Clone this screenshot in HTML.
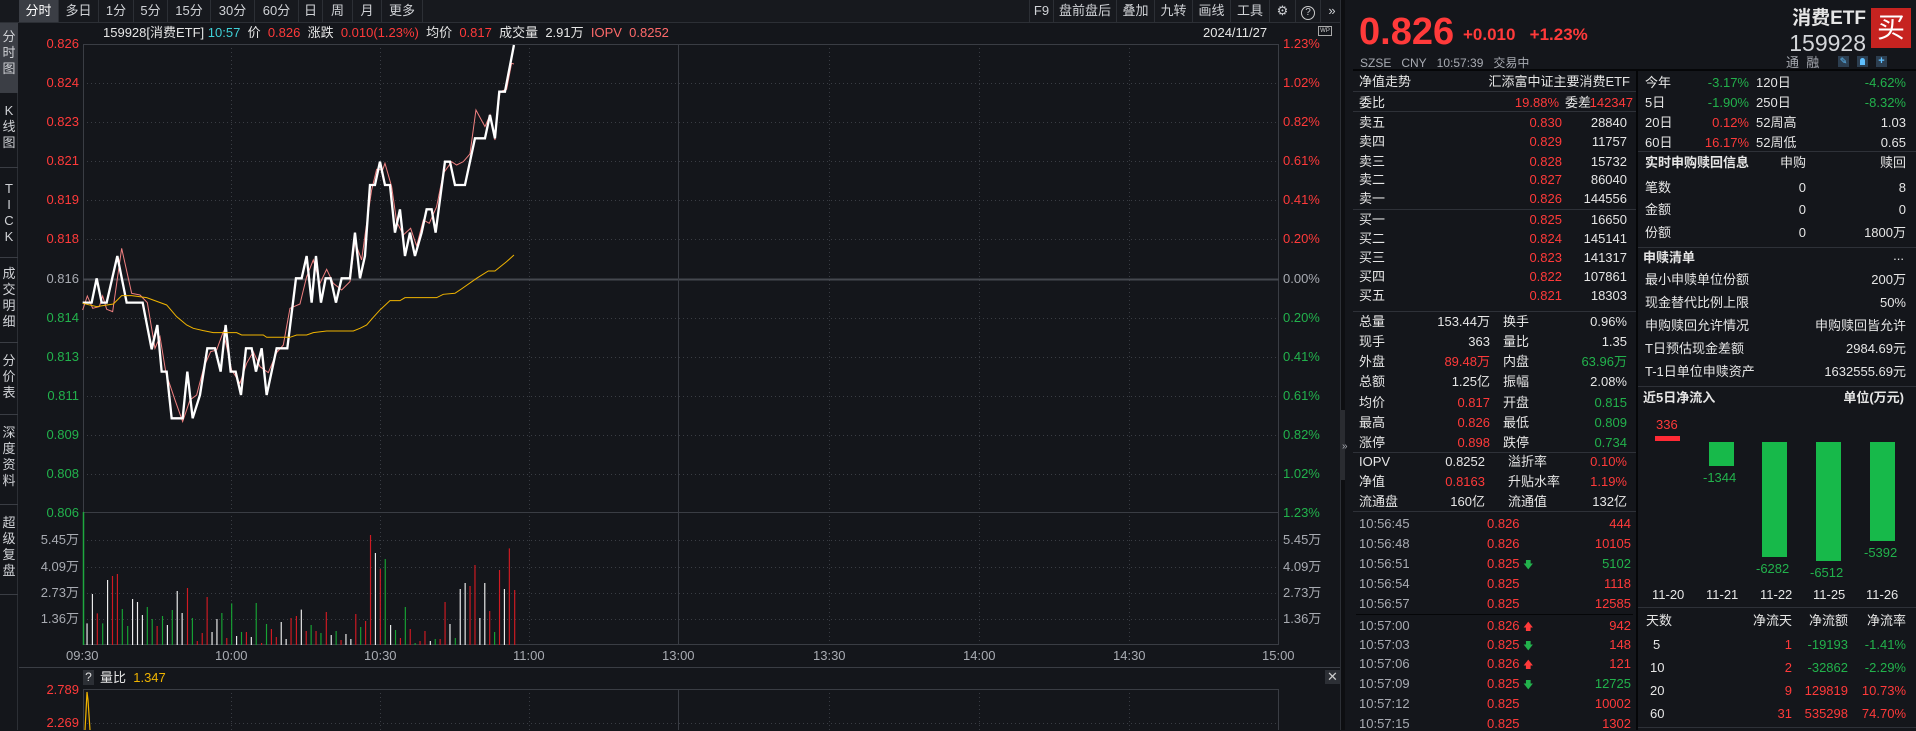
<!DOCTYPE html>
<html><head><meta charset="utf-8"><style>
*{margin:0;padding:0;box-sizing:border-box}
body{width:1916px;height:730px;background:#14161b;position:relative;overflow:hidden;font-family:"Liberation Sans","Noto Sans CJK SC",sans-serif;color:#c9ccd2}
.t{position:absolute;white-space:nowrap;font-size:13px;line-height:14px}
.r{color:#ff3a3a}.g{color:#22b24c}.w{color:#e6e6e6}.gr{color:#a8abb2}
.ra{text-align:right}
.hl{position:absolute;height:1px;background:#2e3138}
.vl{position:absolute;width:1px;background:#2e3138}
.tb{position:absolute;top:0;height:22px;line-height:22px;font-size:13px;color:#d0d2d6;text-align:center;border-right:1px solid #2c2f35}
.sb{position:absolute;left:0;width:18px;font-size:13px;line-height:16px;text-align:center;color:#d0d2d6;border-bottom:1px solid #3a3d44}
</style></head><body>
<!-- toolbar -->
<div style="position:absolute;left:0;top:0;width:1343px;height:23px;background:#17191e;border-bottom:1px solid #2c2f35"></div>
<div class="tb" style="left:19px;width:40px;background:#3b3e45;color:#fff">分时</div>
<div class="tb" style="left:59px;width:40px">多日</div>
<div class="tb" style="left:99px;width:35px">1分</div>
<div class="tb" style="left:134px;width:34px">5分</div>
<div class="tb" style="left:168px;width:43px">15分</div>
<div class="tb" style="left:211px;width:44px">30分</div>
<div class="tb" style="left:255px;width:44px">60分</div>
<div class="tb" style="left:299px;width:24px">日</div>
<div class="tb" style="left:323px;width:30px">周</div>
<div class="tb" style="left:353px;width:29px">月</div>
<div class="tb" style="left:382px;width:41px">更多</div>
<div class="tb" style="left:1029px;width:25px;border-left:1px solid #2c2f35">F9</div>
<div class="tb" style="left:1054px;width:63px">盘前盘后</div>
<div class="tb" style="left:1117px;width:38px">叠加</div>
<div class="tb" style="left:1155px;width:38px">九转</div>
<div class="tb" style="left:1193px;width:38px">画线</div>
<div class="tb" style="left:1231px;width:39px">工具</div>
<div class="tb" style="left:1270px;width:26px">⚙</div>
<div class="tb" style="left:1296px;width:25px"><span style="display:inline-block;width:14px;height:14px;border:1px solid #ccc;border-radius:50%;font-size:10px;line-height:12px">?</span></div>
<div class="tb" style="left:1321px;width:22px;border:none">»</div>
<!-- sidebar -->
<div style="position:absolute;left:0;top:23px;width:18px;height:707px;border-right:1px solid #2c2f35"></div>
<div class="sb" style="top:23px;height:70px;padding-top:6px;background:#3b3e45">分<br>时<br>图</div>
<div class="sb" style="top:93px;height:75px;padding-top:10px">K<br>线<br>图</div>
<div class="sb" style="top:168px;height:90px;padding-top:13px">T<br>I<br>C<br>K</div>
<div class="sb" style="top:258px;height:85px;padding-top:8px">成<br>交<br>明<br>细</div>
<div class="sb" style="top:343px;height:72px;padding-top:10px">分<br>价<br>表</div>
<div class="sb" style="top:415px;height:90px;padding-top:10px">深<br>度<br>资<br>料</div>
<div class="sb" style="top:505px;height:90px;padding-top:10px">超<br>级<br>复<br>盘</div>
<!-- info line -->
<div class="t w" style="left:103px;top:26px">159928[消费ETF] <span style="color:#3fd0d8">10:57</span>&nbsp; <span>价</span>&nbsp; <span class="r">0.826</span>&nbsp; 涨跌&nbsp; <span class="r">0.010(1.23%)</span>&nbsp; 均价&nbsp; <span class="r">0.817</span>&nbsp; 成交量&nbsp; 2.91万&nbsp; <span style="color:#ff6a6a">IOPV&nbsp; 0.8252</span></div>
<div class="t w" style="left:1203px;top:26px">2024/11/27</div>
<div style="position:absolute;left:1318px;top:26px;width:14px;height:10px;border:1px solid #aaa;font-size:6px;color:#ccc;text-align:center;line-height:8px">WP</div>
<!-- chart svg -->
<svg style="position:absolute;left:0;top:0" width="1343" height="730" xmlns="http://www.w3.org/2000/svg">
<g stroke="#3a3d44" stroke-width="1" stroke-dasharray="1,3">
<line x1="83" x2="1279" y1="83.5" y2="83.5"/><line x1="83" x2="1279" y1="122.5" y2="122.5"/><line x1="83" x2="1279" y1="161.5" y2="161.5"/><line x1="83" x2="1279" y1="200.5" y2="200.5"/><line x1="83" x2="1279" y1="239.5" y2="239.5"/>
<line x1="83" x2="1279" y1="318.5" y2="318.5"/><line x1="83" x2="1279" y1="357.5" y2="357.5"/><line x1="83" x2="1279" y1="396.5" y2="396.5"/><line x1="83" x2="1279" y1="435.5" y2="435.5"/><line x1="83" x2="1279" y1="474.5" y2="474.5"/>
<line x1="83" x2="1279" y1="540.5" y2="540.5"/><line x1="83" x2="1279" y1="567.5" y2="567.5"/><line x1="83" x2="1279" y1="593.5" y2="593.5"/><line x1="83" x2="1279" y1="619.5" y2="619.5"/>
<line x1="231.5" x2="231.5" y1="44" y2="645"/><line x1="380.5" x2="380.5" y1="44" y2="645"/><line x1="529.5" x2="529.5" y1="44" y2="645"/><line x1="829.5" x2="829.5" y1="44" y2="645"/><line x1="979.5" x2="979.5" y1="44" y2="645"/><line x1="1129.5" x2="1129.5" y1="44" y2="645"/>
<line x1="231.5" x2="231.5" y1="689" y2="730"/><line x1="380.5" x2="380.5" y1="689" y2="730"/><line x1="529.5" x2="529.5" y1="689" y2="730"/><line x1="829.5" x2="829.5" y1="689" y2="730"/><line x1="979.5" x2="979.5" y1="689" y2="730"/><line x1="1129.5" x2="1129.5" y1="689" y2="730"/>
<line x1="83" x2="1279" y1="723.5" y2="723.5"/>
</g>
<g stroke="#3a3d44" stroke-width="1" fill="none">
<rect x="83.5" y="44.5" width="1195" height="600"/>
<line x1="83" x2="1279" y1="279.5" y2="279.5" stroke="#45484f" stroke-width="2"/>
<line x1="83" x2="1279" y1="512.5" y2="512.5"/>
<line x1="678.5" x2="678.5" y1="44" y2="645"/>
<line x1="678.5" x2="678.5" y1="689" y2="730"/>
<line x1="83.5" x2="83.5" y1="689" y2="730"/><line x1="1278.5" x2="1278.5" y1="689" y2="730"/>
<line x1="83" x2="1279" y1="689.5" y2="689.5"/>
<line x1="19" x2="1343" y1="667.5" y2="667.5"/>
</g>
<line x1="83.5" x2="83.5" y1="512" y2="645" stroke="#1ea83e" stroke-width="1.5"/>
<g transform="translate(0,500) scale(0.4464,0.3333)">
<path stroke="#eeeeee" stroke-width="2.6" d="M195 435V370M207 435V282M241 435V240M297 435V297M308 435V306M319 435V345M375 435V375M397 435V273M408 435V339M475 435V396M486 435V357M530 435V408M563 435V411M630 435V366M641 435V417M675 435V329M742 435V405M775 435V402M786 435V417M841 435V159M875 435V375M964 435V423M1008 435V372M1031 435V267M1042 435V249M1075 435V354M1086 435V249M1130 435V267"/>
<path stroke="#d01a22" stroke-width="2.6" d="M218 435V340M252 435V228M263 435V222M352 435V378M420 435V264M442 435V423M453 435V399M464 435V291M508 435V414M552 435V396M586 435V429M608 435V387M619 435V411M652 435V354M664 435V348M686 435V393M708 435V393M731 435V336M764 435V420M797 435V342M819 435V363M830 435V105M852 435V207M897 435V414M919 435V387M941 435V423M952 435V393M986 435V417M997 435V306M1053 435V258M1064 435V195M1097 435V333M1119 435V210M1141 435V145M1153 435V270"/>
<path stroke="#17a334" stroke-width="2.6" d="M230 435V370M274 435V327M286 435V378M330 435V321M341 435V357M364 435V348M386 435V330M431 435V354M497 435V339M519 435V310M541 435V396M574 435V309M597 435V372M697 435V375M719 435V399M753 435V393M808 435V381M863 435V177M886 435V390M908 435V321M930 435V429M975 435V417M1020 435V414M1108 435V396"/>
</g>
<g transform="translate(60,30) scale(0.3333)" fill="none">
<polyline stroke="#f08080" stroke-width="3" points="68,840 82,798 98,835 118,830 128,798 140,838 158,845 185,655 215,790 240,795 262,818 285,955 300,920 318,1030 345,1110 368,1175 390,1110 410,1095 432,1010 452,965 470,960 490,905 515,1020 540,1060 560,1000 580,965 600,1010 625,1028 650,968 670,945 690,835 720,822 740,740 760,690 780,760 800,718 820,760 845,780 870,755 885,635 905,690 918,595 935,480 950,418 968,420 975,400 995,470 1010,575 1030,615 1052,595 1070,648 1090,570 1108,580 1130,530 1150,430 1175,395 1190,405 1210,395 1230,372 1248,240 1275,290 1290,255 1305,330 1320,185 1340,178 1355,100 1362,102"/>
<polyline stroke="#ffffff" stroke-width="7" points="68,818 95,818 110,745 125,818 140,818 172,678 200,818 248,818 275,958 292,885 305,1025 320,1025 335,1165 368,1165 382,1025 398,1165 420,1095 442,955 465,955 482,1025 497,885 512,1025 527,1025 543,1095 558,955 575,955 588,1025 605,955 620,1095 650,955 682,955 708,745 725,745 740,678 755,818 768,678 783,818 797,745 812,745 828,818 845,745 870,745 885,608 900,745 915,678 930,465 945,465 960,395 975,465 990,465 1005,608 1020,538 1035,678 1050,608 1065,678 1085,608 1100,538 1115,538 1127,608 1155,395 1170,395 1185,465 1215,465 1245,325 1275,325 1290,255 1305,325 1318,185 1335,185 1362,45"/>
<polyline stroke="#f0b400" stroke-width="3" points="68,820 110,830 160,822 185,797 215,797 260,803 320,825 350,860 380,885 400,895 430,902 460,908 530,908 545,915 610,915 620,922 690,922 710,915 740,915 760,908 800,903 880,903 900,895 920,885 940,862 960,840 990,812 1020,812 1035,803 1130,803 1150,793 1185,790 1200,780 1250,745 1285,723 1305,723 1340,695 1362,675"/>
</g>
<polyline fill="none" stroke="#f0b400" stroke-width="1.2" points="85,730 86,712 87,692 88,700 89,715 90,730"/>
</svg>
<!-- left axis labels -->
<div class="t r ra" style="right:1837px;top:37px">0.826</div>
<div class="t r ra" style="right:1837px;top:76px">0.824</div>
<div class="t r ra" style="right:1837px;top:115px">0.823</div>
<div class="t r ra" style="right:1837px;top:154px">0.821</div>
<div class="t r ra" style="right:1837px;top:193px">0.819</div>
<div class="t r ra" style="right:1837px;top:232px">0.818</div>
<div class="t gr ra" style="right:1837px;top:272px">0.816</div>
<div class="t g ra" style="right:1837px;top:311px">0.814</div>
<div class="t g ra" style="right:1837px;top:350px">0.813</div>
<div class="t g ra" style="right:1837px;top:389px">0.811</div>
<div class="t g ra" style="right:1837px;top:428px">0.809</div>
<div class="t g ra" style="right:1837px;top:467px">0.808</div>
<div class="t g ra" style="right:1837px;top:506px">0.806</div>
<div class="t gr ra" style="right:1837px;top:533px">5.45万</div>
<div class="t gr ra" style="right:1837px;top:560px">4.09万</div>
<div class="t gr ra" style="right:1837px;top:586px">2.73万</div>
<div class="t gr ra" style="right:1837px;top:612px">1.36万</div>
<div class="t r ra" style="right:1837px;top:683px">2.789</div>
<div class="t r ra" style="right:1837px;top:716px">2.269</div>
<!-- right axis labels -->
<div class="t r" style="left:1283px;top:37px">1.23%</div>
<div class="t r" style="left:1283px;top:76px">1.02%</div>
<div class="t r" style="left:1283px;top:115px">0.82%</div>
<div class="t r" style="left:1283px;top:154px">0.61%</div>
<div class="t r" style="left:1283px;top:193px">0.41%</div>
<div class="t r" style="left:1283px;top:232px">0.20%</div>
<div class="t gr" style="left:1283px;top:272px">0.00%</div>
<div class="t g" style="left:1283px;top:311px">0.20%</div>
<div class="t g" style="left:1283px;top:350px">0.41%</div>
<div class="t g" style="left:1283px;top:389px">0.61%</div>
<div class="t g" style="left:1283px;top:428px">0.82%</div>
<div class="t g" style="left:1283px;top:467px">1.02%</div>
<div class="t g" style="left:1283px;top:506px">1.23%</div>
<div class="t gr" style="left:1283px;top:533px">5.45万</div>
<div class="t gr" style="left:1283px;top:560px">4.09万</div>
<div class="t gr" style="left:1283px;top:586px">2.73万</div>
<div class="t gr" style="left:1283px;top:612px">1.36万</div>
<!-- time axis -->
<div class="t gr" style="left:66px;top:649px">09:30</div>
<div class="t gr" style="left:215px;top:649px">10:00</div>
<div class="t gr" style="left:364px;top:649px">10:30</div>
<div class="t gr" style="left:513px;top:649px">11:00</div>
<div class="t gr" style="left:662px;top:649px">13:00</div>
<div class="t gr" style="left:813px;top:649px">13:30</div>
<div class="t gr" style="left:963px;top:649px">14:00</div>
<div class="t gr" style="left:1113px;top:649px">14:30</div>
<div class="t gr" style="left:1262px;top:649px">15:00</div>
<div style="position:absolute;left:83px;top:670px;width:11px;height:15px;background:#2c2f35;color:#ddd;font-size:12px;text-align:center;line-height:15px">?</div>
<div class="t w" style="left:100px;top:671px">量比&nbsp;&nbsp;<span style="color:#f0b400">1.347</span></div>
<div style="position:absolute;left:1325px;top:670px;width:15px;height:14px;background:#2c2f35;color:#ccc;font-size:13px;line-height:14px;text-align:center">✕</div>
<!-- divider -->
<div style="position:absolute;left:1340px;top:0;width:5px;height:730px;background:#0d0e11;border-left:1px solid #2c2f35"></div>
<div style="position:absolute;left:1340px;top:410px;width:5px;height:70px;background:#2a2c31"></div>
<div class="t gr" style="left:1342px;top:440px;font-size:10px">»</div>
<!-- right panel header -->
<div class="t r" style="left:1359px;top:12px;font-size:38px;line-height:40px;font-weight:bold">0.826</div>
<div class="t r" style="left:1463px;top:25px;font-size:17px;line-height:20px;font-weight:bold">+0.010&nbsp;&nbsp; +1.23%</div>
<div class="t w ra" style="right:50px;top:9px;font-size:19px;line-height:20px;font-weight:bold">消费ETF</div>
<div class="t ra" style="right:50px;top:31px;font-size:23px;line-height:24px;color:#d4d6da">159928</div>
<div style="position:absolute;left:1871px;top:8px;width:40px;height:40px;background:#c62320;color:#fff;font-size:28px;line-height:40px;text-align:center">买</div>
<div class="t gr" style="left:1360px;top:56px;font-size:12px">SZSE&nbsp;&nbsp; CNY&nbsp;&nbsp; 10:57:39&nbsp;&nbsp; 交易中</div>
<div class="t gr" style="left:1786px;top:56px">通&nbsp;&nbsp;融</div>
<div style="position:absolute;left:1838px;top:56px;width:11px;height:11px;background:#2c3e50;color:#5fc0ff;font-size:9px;line-height:11px;text-align:center">✎</div>
<div style="position:absolute;left:1857px;top:56px;width:11px;height:11px;background:#2c3e50"><div style="margin:2px 3px;width:5px;height:7px;background:#5fc0ff;border-radius:3px 3px 0 0"></div></div>
<div style="position:absolute;left:1876px;top:56px;width:11px;height:11px;background:#2c3e50;color:#5fc0ff;font-size:11px;line-height:11px;text-align:center;font-weight:bold">+</div>
<div class="hl" style="left:1353px;top:69px;width:563px;height:2px;background:#050608"></div>
<div class="vl" style="left:1636px;top:71px;height:659px;background:#050608;width:2px"></div>
<!-- left table -->
<div class="t w" style="left:1359px;top:75px">净值走势</div>
<div class="t w ra" style="right:286px;top:75px">汇添富中证主要消费ETF</div>
<div class="hl" style="left:1353px;top:91px;width:283px"></div>
<div class="t w" style="left:1359px;top:96px">委比</div>
<div class="t r ra" style="right:357px;top:96px">19.88%</div>
<div class="t w" style="left:1565px;top:96px">委差</div>
<div class="t r ra" style="right:283px;top:96px">142347</div>
<div class="hl" style="left:1353px;top:111px;width:283px"></div>
<div class="t w" style="left:1359px;top:116px">卖五</div><div class="t r ra" style="right:354px;top:116px">0.830</div><div class="t w ra" style="right:289px;top:116px">28840</div>
<div class="t w" style="left:1359px;top:135px">卖四</div><div class="t r ra" style="right:354px;top:135px">0.829</div><div class="t w ra" style="right:289px;top:135px">11757</div>
<div class="t w" style="left:1359px;top:155px">卖三</div><div class="t r ra" style="right:354px;top:155px">0.828</div><div class="t w ra" style="right:289px;top:155px">15732</div>
<div class="t w" style="left:1359px;top:173px">卖二</div><div class="t r ra" style="right:354px;top:173px">0.827</div><div class="t w ra" style="right:289px;top:173px">86040</div>
<div class="t w" style="left:1359px;top:192px">卖一</div><div class="t r ra" style="right:354px;top:192px">0.826</div><div class="t w ra" style="right:289px;top:192px">144556</div>
<div class="hl" style="left:1353px;top:209px;width:283px"></div>
<div class="t w" style="left:1359px;top:213px">买一</div><div class="t r ra" style="right:354px;top:213px">0.825</div><div class="t w ra" style="right:289px;top:213px">16650</div>
<div class="t w" style="left:1359px;top:232px">买二</div><div class="t r ra" style="right:354px;top:232px">0.824</div><div class="t w ra" style="right:289px;top:232px">145141</div>
<div class="t w" style="left:1359px;top:251px">买三</div><div class="t r ra" style="right:354px;top:251px">0.823</div><div class="t w ra" style="right:289px;top:251px">141317</div>
<div class="t w" style="left:1359px;top:270px">买四</div><div class="t r ra" style="right:354px;top:270px">0.822</div><div class="t w ra" style="right:289px;top:270px">107861</div>
<div class="t w" style="left:1359px;top:289px">买五</div><div class="t r ra" style="right:354px;top:289px">0.821</div><div class="t w ra" style="right:289px;top:289px">18303</div>
<div class="hl" style="left:1353px;top:311px;width:283px"></div>
<div class="t w" style="left:1359px;top:315px">总量</div><div class="t w ra" style="right:426px;top:315px">153.44万</div><div class="t w" style="left:1503px;top:315px">换手</div><div class="t w ra" style="right:289px;top:315px">0.96%</div>
<div class="t w" style="left:1359px;top:335px">现手</div><div class="t w ra" style="right:426px;top:335px">363</div><div class="t w" style="left:1503px;top:335px">量比</div><div class="t w ra" style="right:289px;top:335px">1.35</div>
<div class="t w" style="left:1359px;top:355px">外盘</div><div class="t r ra" style="right:426px;top:355px">89.48万</div><div class="t w" style="left:1503px;top:355px">内盘</div><div class="t g ra" style="right:289px;top:355px">63.96万</div>
<div class="t w" style="left:1359px;top:375px">总额</div><div class="t w ra" style="right:426px;top:375px">1.25亿</div><div class="t w" style="left:1503px;top:375px">振幅</div><div class="t w ra" style="right:289px;top:375px">2.08%</div>
<div class="t w" style="left:1359px;top:396px">均价</div><div class="t r ra" style="right:426px;top:396px">0.817</div><div class="t w" style="left:1503px;top:396px">开盘</div><div class="t g ra" style="right:289px;top:396px">0.815</div>
<div class="t w" style="left:1359px;top:416px">最高</div><div class="t r ra" style="right:426px;top:416px">0.826</div><div class="t w" style="left:1503px;top:416px">最低</div><div class="t g ra" style="right:289px;top:416px">0.809</div>
<div class="t w" style="left:1359px;top:436px">涨停</div><div class="t r ra" style="right:426px;top:436px">0.898</div><div class="t w" style="left:1503px;top:436px">跌停</div><div class="t g ra" style="right:289px;top:436px">0.734</div>
<div class="hl" style="left:1353px;top:452px;width:283px"></div>
<div class="t w" style="left:1359px;top:455px">IOPV</div><div class="t w ra" style="right:431px;top:455px">0.8252</div><div class="t w" style="left:1508px;top:455px">溢折率</div><div class="t r ra" style="right:289px;top:455px">0.10%</div>
<div class="t w" style="left:1359px;top:475px">净值</div><div class="t r ra" style="right:431px;top:475px">0.8163</div><div class="t w" style="left:1508px;top:475px">升贴水率</div><div class="t r ra" style="right:289px;top:475px">1.19%</div>
<div class="t w" style="left:1359px;top:495px">流通盘</div><div class="t w ra" style="right:431px;top:495px">160亿</div><div class="t w" style="left:1508px;top:495px">流通值</div><div class="t w ra" style="right:289px;top:495px">132亿</div>
<div class="hl" style="left:1353px;top:511px;width:283px"></div>
<div class="t gr" style="left:1359px;top:517px">10:56:45</div><div class="t r" style="left:1487px;top:517px">0.826</div><div class="t r ra" style="right:285px;top:517px">444</div>
<div class="t gr" style="left:1359px;top:537px">10:56:48</div><div class="t r" style="left:1487px;top:537px">0.826</div><div class="t r ra" style="right:285px;top:537px">10105</div>
<div class="t gr" style="left:1359px;top:557px">10:56:51</div><div class="t r" style="left:1487px;top:557px">0.825 <span class="g" style="font-size:10px">🡇</span></div><div class="t g ra" style="right:285px;top:557px">5102</div>
<div class="t gr" style="left:1359px;top:577px">10:56:54</div><div class="t r" style="left:1487px;top:577px">0.825</div><div class="t r ra" style="right:285px;top:577px">1118</div>
<div class="t gr" style="left:1359px;top:597px">10:56:57</div><div class="t r" style="left:1487px;top:597px">0.825</div><div class="t r ra" style="right:285px;top:597px">12585</div>
<div class="hl" style="left:1356px;top:614px;width:277px;background:#050608;height:1px"></div>
<div class="t gr" style="left:1359px;top:619px">10:57:00</div><div class="t r" style="left:1487px;top:619px">0.826 <span style="font-size:10px">🡅</span></div><div class="t r ra" style="right:285px;top:619px">942</div>
<div class="t gr" style="left:1359px;top:638px">10:57:03</div><div class="t r" style="left:1487px;top:638px">0.825 <span class="g" style="font-size:10px">🡇</span></div><div class="t r ra" style="right:285px;top:638px">148</div>
<div class="t gr" style="left:1359px;top:657px">10:57:06</div><div class="t r" style="left:1487px;top:657px">0.826 <span style="font-size:10px">🡅</span></div><div class="t r ra" style="right:285px;top:657px">121</div>
<div class="t gr" style="left:1359px;top:677px">10:57:09</div><div class="t r" style="left:1487px;top:677px">0.825 <span class="g" style="font-size:10px">🡇</span></div><div class="t g ra" style="right:285px;top:677px">12725</div>
<div class="t gr" style="left:1359px;top:697px">10:57:12</div><div class="t r" style="left:1487px;top:697px">0.825</div><div class="t r ra" style="right:285px;top:697px">10002</div>
<div class="t gr" style="left:1359px;top:717px">10:57:15</div><div class="t r" style="left:1487px;top:717px">0.825</div><div class="t r ra" style="right:285px;top:717px">1302</div>
<!-- right column -->
<div class="t w" style="left:1645px;top:76px">今年</div><div class="t g ra" style="right:167px;top:76px">-3.17%</div><div class="t w" style="left:1756px;top:76px">120日</div><div class="t g ra" style="right:10px;top:76px">-4.62%</div>
<div class="t w" style="left:1645px;top:96px">5日</div><div class="t g ra" style="right:167px;top:96px">-1.90%</div><div class="t w" style="left:1756px;top:96px">250日</div><div class="t g ra" style="right:10px;top:96px">-8.32%</div>
<div class="t w" style="left:1645px;top:116px">20日</div><div class="t r ra" style="right:167px;top:116px">0.12%</div><div class="t w" style="left:1756px;top:116px">52周高</div><div class="t w ra" style="right:10px;top:116px">1.03</div>
<div class="t w" style="left:1645px;top:136px">60日</div><div class="t r ra" style="right:167px;top:136px">16.17%</div><div class="t w" style="left:1756px;top:136px">52周低</div><div class="t w ra" style="right:10px;top:136px">0.65</div>
<div class="hl" style="left:1638px;top:151px;width:278px"></div>
<div class="t w" style="left:1645px;top:156px;font-weight:bold">实时申购赎回信息</div><div class="t w ra" style="right:110px;top:156px">申购</div><div class="t w ra" style="right:10px;top:156px">赎回</div>
<div class="t w" style="left:1645px;top:181px">笔数</div><div class="t w ra" style="right:110px;top:181px">0</div><div class="t w ra" style="right:10px;top:181px">8</div>
<div class="t w" style="left:1645px;top:203px">金额</div><div class="t w ra" style="right:110px;top:203px">0</div><div class="t w ra" style="right:10px;top:203px">0</div>
<div class="t w" style="left:1645px;top:226px">份额</div><div class="t w ra" style="right:110px;top:226px">0</div><div class="t w ra" style="right:10px;top:226px">1800万</div>
<div class="hl" style="left:1638px;top:247px;width:278px"></div>
<div class="t w" style="left:1643px;top:251px;font-weight:bold">申赎清单</div><div class="t w ra" style="right:12px;top:249px">...</div>
<div class="t w" style="left:1645px;top:273px">最小申赎单位份额</div><div class="t w ra" style="right:10px;top:273px">200万</div>
<div class="t w" style="left:1645px;top:296px">现金替代比例上限</div><div class="t w ra" style="right:10px;top:296px">50%</div>
<div class="t w" style="left:1645px;top:319px">申购赎回允许情况</div><div class="t w ra" style="right:10px;top:319px">申购赎回皆允许</div>
<div class="t w" style="left:1645px;top:342px">T日预估现金差额</div><div class="t w ra" style="right:10px;top:342px">2984.69元</div>
<div class="t w" style="left:1645px;top:365px">T-1日单位申赎资产</div><div class="t w ra" style="right:10px;top:365px">1632555.69元</div>
<div class="hl" style="left:1638px;top:386px;width:278px"></div>
<div class="t w" style="left:1643px;top:391px;font-weight:bold">近5日净流入</div><div class="t w ra" style="right:12px;top:391px;font-weight:bold">单位(万元)</div>
<div class="t r" style="left:1656px;top:418px">336</div>
<div style="position:absolute;left:1655px;top:436px;width:25px;height:5px;background:#ff2a35"></div>
<div style="position:absolute;left:1709px;top:442px;width:25px;height:24px;background:#17b94a"></div>
<div class="t g" style="left:1703px;top:471px">-1344</div>
<div style="position:absolute;left:1762px;top:442px;width:25px;height:115px;background:#17b94a"></div>
<div class="t g" style="left:1756px;top:562px">-6282</div>
<div style="position:absolute;left:1816px;top:442px;width:25px;height:119px;background:#17b94a"></div>
<div class="t g" style="left:1810px;top:566px">-6512</div>
<div style="position:absolute;left:1870px;top:442px;width:25px;height:99px;background:#17b94a"></div>
<div class="t g" style="left:1864px;top:546px">-5392</div>
<div class="t w" style="left:1652px;top:588px">11-20</div>
<div class="t w" style="left:1706px;top:588px">11-21</div>
<div class="t w" style="left:1760px;top:588px">11-22</div>
<div class="t w" style="left:1813px;top:588px">11-25</div>
<div class="t w" style="left:1866px;top:588px">11-26</div>
<div class="hl" style="left:1638px;top:607px;width:278px"></div>
<div class="t w" style="left:1646px;top:614px">天数</div><div class="t w ra" style="right:124px;top:614px">净流天</div><div class="t w ra" style="right:68px;top:614px">净流额</div><div class="t w ra" style="right:10px;top:614px">净流率</div>
<div class="t w" style="left:1653px;top:638px">5</div><div class="t r ra" style="right:124px;top:638px">1</div><div class="t g ra" style="right:68px;top:638px">-19193</div><div class="t g ra" style="right:10px;top:638px">-1.41%</div>
<div class="t w" style="left:1650px;top:661px">10</div><div class="t r ra" style="right:124px;top:661px">2</div><div class="t g ra" style="right:68px;top:661px">-32862</div><div class="t g ra" style="right:10px;top:661px">-2.29%</div>
<div class="t w" style="left:1650px;top:684px">20</div><div class="t r ra" style="right:124px;top:684px">9</div><div class="t r ra" style="right:68px;top:684px">129819</div><div class="t r ra" style="right:10px;top:684px">10.73%</div>
<div class="t w" style="left:1650px;top:707px">60</div><div class="t r ra" style="right:124px;top:707px">31</div><div class="t r ra" style="right:68px;top:707px">535298</div><div class="t r ra" style="right:10px;top:707px">74.70%</div>
<div class="hl" style="left:1638px;top:727px;width:278px"></div>
</body></html>
